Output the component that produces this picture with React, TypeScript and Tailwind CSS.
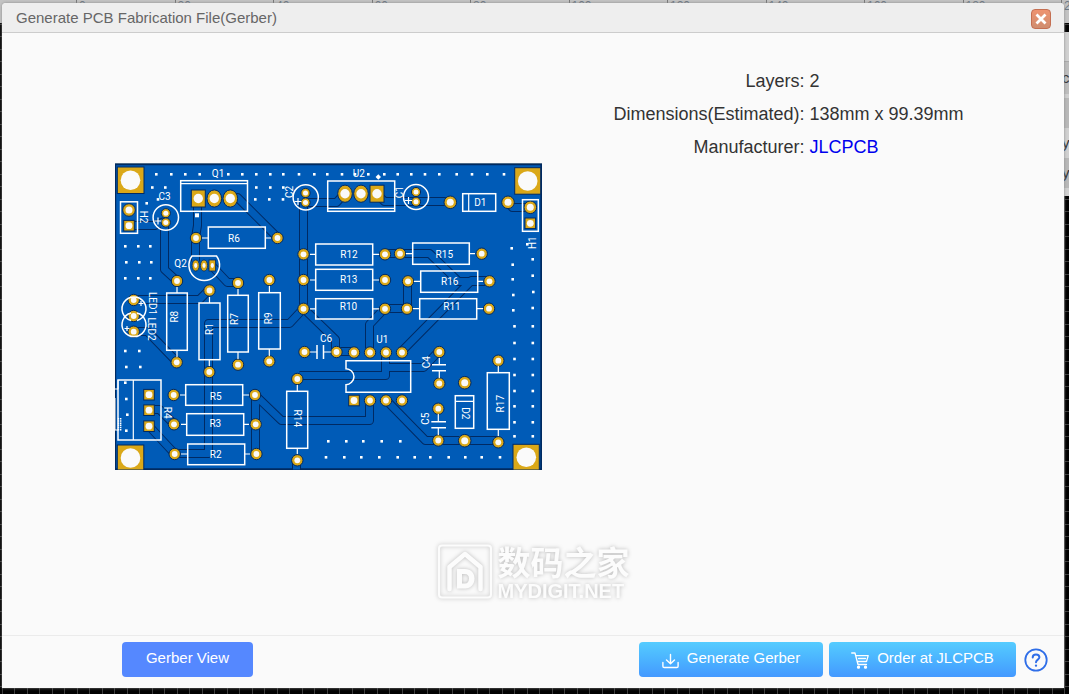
import React from "react";

type Pt = [number, number];
type Box = [number, number, number, number];
type Label = [string, number, number, number];

const GOLD = "#daa818";
const BLUE = "#005bb7";
const NAVY = "#002a63";
const HOLE = "#fafafa";

const traces: string[] = [
  "M198 200V226L196 238V262",
  "M230 198H238L277 237",
  "M129 226H155L165 222",
  "M165 222V270L177 281",
  "M212 266L228 283H238",
  "M134 300H200L209 291",
  "M134 332H148L177 362",
  "M175 454H209V324H290L304 309",
  "M149 410H160L174 424",
  "M149 426L175 454",
  "M304 203V309",
  "M305 203H337L345 194",
  "M377 194L385 202H450",
  "M385 254H430L459 282H489",
  "M489 281H472L402 352",
  "M408 281V309",
  "M385 309H408",
  "M385 309L370 325V352",
  "M304 309L336 340V352H354",
  "M386 352V376H300",
  "M388 368H424L439 352",
  "M370 400V421H282L255 395",
  "M256 395V454",
  "M386 400L426 441H498",
  "M508 202L513 208H530",
  "M297 460V470",
];

const pads: Pt[] = [
  [196, 238], [277.5, 238], [177, 281], [238, 283], [209.5, 290.5], [133.7, 300], [133.7, 316], [133.7, 331.7],
  [176.7, 362.3], [209.3, 372], [238, 364.7], [269.4, 280], [269.3, 361.3], [303.5, 254.3], [385, 254.3],
  [303.5, 280], [385, 280], [303.5, 308.8], [385, 308.8], [400, 253.7], [481.7, 253.7], [408, 281.3], [489.5, 281.3],
  [407, 308.7], [489, 308.7], [173.7, 395], [255, 395], [174, 424.3], [255.7, 424.3], [174.7, 454], [256.4, 454],
  [304.5, 352], [336.5, 352], [354, 352.5], [370, 352.5], [386, 352.5], [402, 352.5], [370, 400.5], [386, 400.5],
  [402, 400.5], [297.3, 379], [297.3, 460.3], [439.3, 352], [439.3, 383.5], [438.3, 408.7], [438.3, 440.5],
  [498.3, 360.7], [498.3, 442.3],
];

const largePads: Pt[] = [[450.3, 202.3], [508, 202.3], [464.7, 382.7], [464.7, 440.7], [129, 210], [530.3, 207.3]];
const smallPads: Pt[] = [[165.8, 213.2], [165.8, 222.5], [305.5, 193], [305.5, 202.5], [416, 192], [416, 201.7]];
const squarePads: Pt[] = [[129, 225.7], [530.3, 223.3], [149, 394.7], [149, 410.2], [149, 426.2], [354, 400.5]];

const outlines: Box[] = [
  [180.7, 180.7, 66.8, 30.6], [120.5, 201.8, 17, 31.5], [208.3, 227, 57, 21.3], [166.7, 293, 20.6, 57.3],
  [199, 303, 21, 56.7], [227.7, 295.3, 20.6, 56.7], [258.7, 292.7, 21.6, 56.3], [327.7, 181, 67, 30.3],
  [315.7, 244, 57, 21], [315.7, 269.3, 57, 21], [315.7, 298.7, 57, 20.3], [462.7, 193.7, 33, 17.6],
  [522.5, 199.7, 15.8, 31.6], [412.7, 243, 56.6, 21.3], [420.7, 271, 57, 21.3], [419.7, 298.7, 57, 20.3],
  [185.7, 384.7, 57, 20.6], [186.7, 413.7, 57, 21.6], [187.7, 444, 57, 20.7], [118, 380, 43, 60],
  [286.7, 391.3, 21, 57], [455.3, 395.7, 18.4, 32.6], [487.3, 372.7, 22, 56.6],
];

const labels: Label[] = [
  ["Q1", 218, 173, 0], ["C3", 164.5, 196, 0], ["H2", 143.5, 217, 90], ["R6", 234, 238.6, 0], ["Q2", 180.5, 263, 0],
  ["LED1", 153, 303.5, 90], ["LED2", 151.5, 329, 90], ["R8", 174.7, 316.7, -90], ["R1", 209, 329, -90],
  ["R7", 234.7, 319, -90], ["R9", 268, 318.3, -90], ["C2", 289, 192, -90], ["U2", 358.7, 173, 0],
  ["R12", 349, 254, 0], ["R13", 348.7, 279.3, 0], ["R10", 348.5, 306, 0], ["C1", 399.7, 192.3, -90],
  ["D1", 480.3, 202, 0], ["H1", 532.7, 242.7, -90], ["R15", 444.3, 254, 0], ["R16", 449.7, 281.3, 0],
  ["R11", 452, 306.7, 0], ["R5", 215.7, 396, 0], ["R3", 215.3, 423.5, 0], ["R2", 215.7, 454, 0],
  ["R4", 167.7, 412.7, 90], ["C6", 326, 338.7, 0], ["U1", 382.3, 339.3, 0], ["R14", 298, 418.3, 90],
  ["C4", 426, 362.3, -90], ["C5", 425, 418.7, -90], ["D2", 465.3, 413.3, 90], ["R17", 500, 403.7, -90],
];

const silkLines =
  "M181 183.7H247M328 208.3H394M468.7 194V211M133.3 380V440M456 401.3H473" +
  "M202 238H208M177 287V293M209.5 297V303M238 289V295M269.4 286V293M177 350V357M209.3 360V366M238 352V359M269.3 349V356" +
  "M266 238H271M310 254.3H316M373 254.3H379M310 280H316M373 280H379M310 308.8H316M373 308.8H379" +
  "M406 253.7H412M469 253.7H475M414 281.3H420M478 281.3H483M413 308.7H419M477 308.7H483" +
  "M180 395H185M243 395H249M181 424.3H187M244 424.3H249M181 454H187M245 454H250M297.3 385V391M297.3 448V454" +
  "M498.3 366V373M498.3 430V436M310 352H317M323.5 352H331M439.3 358V365M439.3 371V378M438.3 414V421M438.3 428V435" +
  "M158 217.5V224.5M154.5 221H161.5M298 198V205M294.5 201.5H301.5M408.5 197V204M405 200.5H412" +
  "M141 301V306M138.5 303.5H143.5M127 326V331M124.5 328.5H129.5";

const viaRows: { y: number; xs: number[] }[] = [
  { y: 174.3, xs: [156.3, 171.3, 185.3, 199.7, 228.3, 242.3, 256.3, 270.3, 283.3, 299, 314.3, 327.3, 342, 355, 368.3, 384.3, 397.7, 411.3, 425, 439.3, 456.7, 472, 487.3, 504] },
  { y: 187.5, xs: [152.3, 165.3, 256.3, 270.3, 283.3] },
  { y: 199.4, xs: [158, 255.3, 269.3, 283] },
  { y: 203.3, xs: [146.7] },
  { y: 246.3, xs: [125.3, 138.3, 150.3] },
  { y: 262.3, xs: [126.3, 139.3, 151.3] },
  { y: 278.3, xs: [125.3, 138.3, 150.3] },
  { y: 351, xs: [125.3, 139.3] },
  { y: 367, xs: [126.3, 140.3] },
  { y: 441.3, xs: [328.3, 346.3, 363.3, 381.7, 400.3] },
  { y: 457.3, xs: [326, 344.3, 361.3, 379.3, 397.7, 414.7, 430.3, 448.7, 465.3, 481.7, 500] },
];

const viaPoints: Pt[] = [
  [511.7, 248.3], [512.7, 264.7], [512.7, 279.3], [513.3, 295], [513.3, 310.3],
  [527.3, 244.3], [532.7, 259.3], [532.7, 275.7], [533.3, 292], [532.7, 308],
  [125.3, 382.7], [126.3, 399], [127.3, 414.7], [126.3, 430.7],
];

const edgeViaRows = [326.3, 343, 359, 375, 391, 406.3, 422.3, 436.3];

const corners: { box: Box; hole: Pt }[] = [
  { box: [117.3, 167, 26.7, 26.5], hole: [130.5, 180.3] },
  { box: [514.7, 167.7, 26, 26.5], hole: [527.7, 181] },
  { box: [117.3, 445, 26.5, 25], hole: [130.5, 458] },
  { box: [513, 444.3, 26.3, 25.7], hole: [526.3, 457.3] },
];

function RoundPad({ at, r, hole }: { at: Pt; r: number; hole: number }) {
  return (
    <g>
      <circle cx={at[0]} cy={at[1]} r={r} fill={GOLD} stroke={NAVY} strokeWidth="1" />
      <circle cx={at[0]} cy={at[1]} r={hole} fill={HOLE} />
    </g>
  );
}

function Via({ at }: { at: Pt }) {
  return <rect x={at[0] - 1.3} y={at[1] - 1.3} width="2.6" height="2.6" fill="#fff" />;
}

function TransistorPad({ x, y, square }: { x: number; y: number; square?: boolean }) {
  return (
    <g>
      {square ? (
        <rect x={x - 7} y={y - 8.5} width="14" height="17" fill={GOLD} stroke={NAVY} />
      ) : (
        <ellipse cx={x} cy={y} rx="7.3" ry="8.6" fill={GOLD} stroke={NAVY} />
      )}
      <circle cx={x} cy={y} r="4.7" fill={HOLE} />
    </g>
  );
}

function Board() {
  return (
    <svg viewBox="115 163 427 307" className="block h-auto w-[427px] shrink-0" role="img" aria-label="PCB preview">
      <rect x="115" y="163" width="427" height="307" fill={BLUE} />
      <path d="M115 470V164H541.5V470" fill="none" stroke="#002a60" strokeWidth="2.4" />
      <path d="M115 469.2H542" stroke="#002a60" strokeWidth="1.8" />
      <path d="M115 163.4H542" stroke="#6f8597" strokeWidth="0.8" />
      <g transform="translate(-0.5 -0.5)" fill="none" strokeLinejoin="round">
        <g stroke={NAVY} strokeWidth="9">
          {traces.map((d) => <path key={d} d={d} />)}
        </g>
        <g stroke={BLUE} strokeWidth="7">
          {traces.map((d) => <path key={d} d={d} />)}
        </g>
      </g>
      {corners.map(({ box: [x, y, w, h], hole }) => (
        <g key={`${x}-${y}`}>
          <rect x={x} y={y} width={w} height={h} fill={GOLD} stroke={NAVY} strokeWidth="1" />
          <circle cx={hole[0]} cy={hole[1]} r="9.8" fill={HOLE} />
        </g>
      ))}
      {pads.map((p) => <RoundPad key={p.join()} at={p} r={5.7} hole={2.9} />)}
      {largePads.map((p) => <RoundPad key={p.join()} at={p} r={6.3} hole={3.5} />)}
      {smallPads.map((p) => <RoundPad key={p.join()} at={p} r={4.6} hole={2.5} />)}
      {squarePads.map(([x, y]) => (
        <g key={`${x}-${y}`}>
          <rect x={x - 5.3} y={y - 5.3} width="10.6" height="10.6" fill={GOLD} stroke={NAVY} />
          <circle cx={x} cy={y} r="3.4" fill={HOLE} />
        </g>
      ))}
      <TransistorPad x={198.3} y={198.5} square />
      <TransistorPad x={214.3} y={198.5} />
      <TransistorPad x={230.3} y={198.5} />
      <TransistorPad x={345} y={193.7} />
      <TransistorPad x={361} y={193.7} />
      <TransistorPad x={377} y={193.7} square />
      <g fill={GOLD} stroke={NAVY} strokeWidth="0.8">
        <ellipse cx="195.7" cy="265.5" rx="3.6" ry="5.6" />
        <ellipse cx="204" cy="265.5" rx="3.6" ry="5.6" />
        <rect x="209" y="260" width="6.6" height="11" />
      </g>
      <g fill={HOLE}>
        <ellipse cx="195.7" cy="265.5" rx="1.6" ry="2.4" />
        <ellipse cx="204" cy="265.5" rx="1.6" ry="2.4" />
        <ellipse cx="212.3" cy="265.5" rx="1.6" ry="2.4" />
      </g>
      <g fill="none" stroke="#fff" strokeWidth="1.5">
        {outlines.map(([x, y, w, h]) => <rect key={`${x}-${y}`} x={x} y={y} width={w} height={h} />)}
        <circle cx="165.8" cy="217.5" r="12.7" />
        <circle cx="305.7" cy="197.3" r="12.6" />
        <circle cx="416" cy="197" r="12.5" />
        <path d="M131 320.5a12 12 0 1 1 6 0M131 313a12 12 0 1 0 6 0" />
        <path d="M192 256H216.5A15.3 15.3 0 1 1 192 256Z" />
        <path d="M346 360.7H410.7V392.3H346V384.7C350 384.7 354 381 354 376.7S350 368.7 346 368.7Z" />
        <path d="M317 345V359M323.5 345V359M432 364.7H446M432 370.7H446M431.3 421.7H446M431.3 427.7H446" />
        <path d={silkLines} strokeWidth="1.2" />
        <path d="M115 389H118V380M115 398V430H118" strokeWidth="1" />
      </g>
      {viaRows.map((row) => row.xs.map((x) => <Via key={`${x}-${row.y}`} at={[x, row.y]} />))}
      {viaPoints.map((p) => <Via key={p.join()} at={p} />)}
      {edgeViaRows.map((y) => (
        <g key={y}>
          <Via at={[514.5, y]} />
          <Via at={[532.8, y]} />
        </g>
      ))}
      <rect x="195" y="213.3" width="4" height="4" fill="#fff" />
      <path d="M378.3 174.3L381 177L378.3 179.7L375.6 177Z" fill="#fff" />
      <path d="M118.5 418V431M120.7 418V431" stroke="#fff" strokeWidth="1.4" strokeDasharray="1.5 0.7" />
      <g fill="#fff" fontFamily="Roboto, sans-serif" fontSize="10" textAnchor="middle">
        {labels.map(([text, x, y, angle]) => (
          <text key={text} transform={`translate(${x} ${y}) rotate(${angle})`} y="3.6">
            {text}
          </text>
        ))}
      </g>
    </svg>
  );
}

function Watermark() {
  return (
    <div className="mx-auto mt-[72px] flex w-fit items-center gap-[5px] text-[#fcfcfc] drop-shadow-[0_0_2px_rgba(0,0,0,0.25)]">
      <svg viewBox="0 0 56 58" className="h-[58px] w-14" fill="none" aria-hidden="true">
        <rect x="2" y="2.5" width="52" height="52" rx="3" stroke="currentColor" strokeWidth="2" />
        <path d="M12.5 46V24L28 11L43.5 24V46" stroke="currentColor" strokeWidth="4.5" strokeLinecap="round" strokeLinejoin="round" />
        <path fillRule="evenodd" fill="currentColor" d="M20 26H28C34 26 37.500 30 37.500 35.500S34 45.500 28 45.500H20ZM25 31V40.500H28C30.500 40.500 32 38.500 32 35.500S30.500 31 28 31Z" />
      </svg>
      <div className="whitespace-nowrap">
        <div className="font-['Noto_Sans_CJK_SC',sans-serif] text-[33px] leading-[39px] font-bold">数码之家</div>
        <div className="text-[20px] leading-[21px] font-bold">MYDIGIT.NET</div>
      </div>
    </div>
  );
}

const rulerTicks = ["0", "20", "40", "60", "80", "100", "120", "140", "160", "180", "200"];

function EditorBackdrop() {
  return (
    <div aria-hidden="true" className="absolute inset-0 overflow-hidden bg-black bg-[linear-gradient(to_right,transparent_11px,#3d3d3d_11px,#3d3d3d_12px,transparent_12px,transparent_24px,#3d3d3d_24px),linear-gradient(to_bottom,transparent_11px,#3d3d3d_11px,#3d3d3d_12px,transparent_12px,transparent_24px,#3d3d3d_24px)] bg-[length:25px_25px] bg-[position:3px_0px]">
      <div className="flex h-[23px] overflow-hidden bg-[#c3c3c3] pl-[76px] text-[12px] leading-[12px] text-[#6b7784]">
        {rulerTicks.map((t) => (
          <div key={t} className="w-[98px] shrink-0 grow border-l border-[#777] pl-[2px] last:w-2 last:grow-0">
            {t}
          </div>
        ))}
      </div>
      <div className="mt-[9px] ml-auto w-[7px] overflow-hidden bg-[#d0d0d0] text-[15px] text-[#333]">
        <div className="h-[30px] border-b border-[#aaa]" />
        <div className="h-8 bg-[#bdbdbd] leading-8">c</div>
        <div className="mt-1 h-[30px] bg-[#b8b8b8]" />
        <div className="h-[30px] leading-[30px]">y</div>
        <div className="h-[30px] bg-[#b8b8b8] leading-[30px]">y</div>
        <div className="h-2" />
      </div>
    </div>
  );
}

const primary =
  "flex h-[35px] cursor-pointer items-center justify-center gap-2 rounded-[4px] bg-linear-to-b from-[#55ccff] to-[#4499ff] pb-[2px] text-[15px] text-white";

export default function App() {
  return (
    <div className="relative flex min-h-screen pt-[3px] pr-[5px] pb-[6px] pl-[2px] font-['Liberation_Sans',Arial,sans-serif]">
      <EditorBackdrop />
      <section role="dialog" aria-labelledby="dialog-title" className="relative flex flex-1 flex-col rounded-t-[4px] bg-[#fafafa] shadow-[0_0_3px_#888]">
        <header className="flex h-[30px] items-center justify-between rounded-t-[4px] border-b border-[#ccc] bg-[#eeeeee] pt-[2px] pr-[13px] pl-[14px]">
          <h1 id="dialog-title" className="text-[15px] text-[#666]">Generate PCB Fabrication File(Gerber)</h1>
          <button type="button" aria-label="Close" className="flex size-5 cursor-pointer items-center justify-center rounded-[4px] border border-[#c46f52] bg-linear-to-b from-[#ee9370] to-[#cf8d70]">
            <svg viewBox="0 0 12 12" className="size-3" fill="none" stroke="#fff" strokeWidth="2.8">
              <path d="M1.5 1.5L10.5 10.5M10.5 1.5L1.5 10.5" />
            </svg>
          </button>
        </header>

        <main className="flex-1">
          <div className="flex justify-center gap-[71px] pl-[13px]">
            <div className="pt-[130px]">
              <Board />
            </div>
            <dl className="grid h-fit grid-cols-[auto_auto] gap-x-[5px] pt-8 text-[18px] leading-[33px] whitespace-nowrap text-[#333]">
              <dt className="text-right">Layers:</dt>
              <dd>2</dd>
              <dt className="text-right">Dimensions(Estimated):</dt>
              <dd>138mm x 99.39mm</dd>
              <dt className="text-right">Manufacturer:</dt>
              <dd><a href="#jlcpcb" className="text-[#0000ee]">JLCPCB</a></dd>
            </dl>
          </div>
          <Watermark />
        </main>

        <footer className="flex h-[53px] items-start border-t border-[#ebebeb] pt-[6px] pr-4 pl-[120px]">
          <button type="button" className="h-[35px] w-[131px] cursor-pointer rounded-[4px] bg-[#5588ff] pb-[2px] text-[15px] text-white">
            Gerber View
          </button>
          <div className="ml-auto flex items-center gap-[6px]">
            <button type="button" className={`${primary} w-[184px]`}>
              <svg viewBox="0 0 17 16" className="mt-1 h-4 w-[17px]" fill="none" stroke="currentColor" strokeWidth="1.4" strokeLinecap="round" strokeLinejoin="round">
                <path d="M8.5 1.5V10.5M4.5 7L8.5 10.8L12.5 7M0.9 9.5V13.2Q0.9 14.5 2.2 14.5H14.8Q16.1 14.5 16.1 13.2V9.5" />
              </svg>
              Generate Gerber
            </button>
            <button type="button" className={`${primary} w-[187px]`}>
              <svg viewBox="0 0 18 17" className="mt-1 h-[17px] w-[18px]" fill="none" stroke="currentColor" strokeWidth="1.3" strokeLinecap="round" strokeLinejoin="round">
                <path d="M0.7 1H4L7 12.5H15.5M4.8 3.6H17.2L15.5 9.5H6.3M7.5 6.5H14.5" />
                <circle cx="7.5" cy="15.2" r="1" fill="currentColor" />
                <circle cx="14.5" cy="15.2" r="1" fill="currentColor" />
              </svg>
              Order at JLCPCB
            </button>
            <button type="button" aria-label="Help" className="ml-[2px] cursor-pointer">
              <svg viewBox="0 0 24 24" className="size-6" fill="none" stroke="#2f6ee8" strokeWidth="2" strokeLinecap="round">
                <circle cx="12" cy="12" r="10.7" strokeWidth="1.8" />
                <path d="M8.7 9.5C8.7 7.5 10.1 6.4 12 6.4S15.4 7.5 15.4 9.3C15.4 11.6 12 11.6 12 14.2" />
                <path d="M12 17.6V17.7" strokeWidth="2.3" />
              </svg>
            </button>
          </div>
        </footer>
      </section>
    </div>
  );
}
